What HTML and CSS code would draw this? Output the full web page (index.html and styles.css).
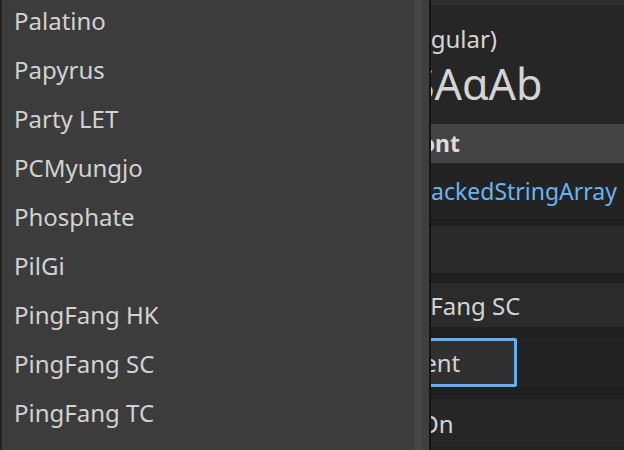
FILE: index.html
```html
<!DOCTYPE html>
<html>
<head>
<meta charset="utf-8">
<link rel="stylesheet" href="styles.css">
</head>
<body>
<div class="inspector">
  <div class="top-strip"></div>
  <div class="preview">
    <div class="preview-name"><span class="pad-name"></span>(Regular)</div>
    <div class="preview-sample"><span class="pad-sample"></span>SAɑAb</div>
  </div>
  <div class="section-header"><span class="pad-header"></span>Font</div>
  <div class="row row-array"><span class="array-text">PackedStringArray</span></div>
  <div class="gap gap-small"></div>
  <div class="row row-empty"></div>
  <div class="gap gap-mid"></div>
  <div class="row row-value"><span class="pad-value"></span>PingFang SC</div>
  <div class="gap gap-mid"></div>
  <div class="row row-input">
    <div class="input-box"><span class="pad-input"></span>Content</div>
  </div>
  <div class="gap gap-large"></div>
  <div class="row row-on"><span class="pad-on"></span>On</div>
</div>

<div class="popup">
  <ul class="font-list">
    <li>Palatino</li>
    <li>Papyrus</li>
    <li>Party LET</li>
    <li>PCMyungjo</li>
    <li>Phosphate</li>
    <li>PilGi</li>
    <li>PingFang HK</li>
    <li>PingFang SC</li>
    <li>PingFang TC</li>
  </ul>
  <div class="scrollbar">
    <div class="scroll-track"></div>
    <div class="scroll-edge"></div>
  </div>
</div>
</body>
</html>
```

FILE: styles.css
```css
html, body {
  margin: 0;
  padding: 0;
}
body {
  width: 624px;
  height: 450px;
  overflow: hidden;
  position: relative;
  background: #222222;
  font-family: "Noto Sans", "Open Sans", sans-serif;
  color: #d4d4d4;
}
.inspector {
  display: flex;
  flex-direction: column;
  width: 624px;
}
.top-strip {
  height: 5px;
  background: #2e2e2e;
}
.preview {
  height: 119px;
  background: #262626;
  display: flex;
  flex-direction: column;
  white-space: nowrap;
}
.preview-name {
  font-size: 24px;
  line-height: 30px;
  margin-top: 19px;
  display: flex;
}
.pad-name { width: 395px; flex: none; }
.preview-sample {
  font-size: 43px;
  line-height: 50px;
  margin-top: 5px;
  display: flex;
}
.pad-sample { width: 411px; flex: none; }
.section-header {
  height: 39px;
  background: #444444;
  font-weight: bold;
  font-size: 23px;
  line-height: 39px;
  color: #dcdcdc;
  display: flex;
  white-space: nowrap;
}
.pad-header { width: 408px; flex: none; }
.row {
  display: flex;
  align-items: center;
  white-space: nowrap;
  font-size: 24px;
}
.row-array {
  height: 56px;
  background: #232323;
  justify-content: flex-end;
  padding-right: 7px;
}
.array-text { color: #66b5f2; font-size: 23px; }
.gap-small { height: 7px; background: #1f1f1f; }
.gap-mid { height: 10px; background: #202020; }
.gap-large { height: 12px; background: #202020; }
.row-empty { height: 47px; background: #2a2a2a; }
.row-value {
  height: 44px;
  background: #2b2b2b;
}
.row-on {
  height: 47px;
  background: #262626;
  padding-top: 2px;
  box-sizing: border-box;
}
.pad-value { width: 380px; flex: none; }
.pad-on { width: 420px; flex: none; }
.row-input {
  height: 50px;
  background: #232323;
}
.input-box {
  margin-left: 360px;
  width: 157px;
  height: 49px;
  border: 3px solid #62b0f3;
  border-radius: 2px;
  background: #303030;
  display: flex;
  align-items: center;
  box-sizing: border-box;
}
.pad-input { width: 7px; flex: none; }

.popup {
  position: absolute;
  left: 0;
  top: 0;
  width: 431px;
  height: 450px;
  display: flex;
  background: #3c3c3c;
  border-left: 2px solid #232323;
  box-sizing: border-box;
  overflow: hidden;
}
.font-list {
  list-style: none;
  margin: 0;
  padding: 0 0 0 12px;
  flex: 1;
  font-size: 24px;
  line-height: 49px;
  margin-top: -4px;
  color: #d2d2d2;
}
.font-list li { white-space: nowrap; }
.scrollbar {
  display: flex;
  width: 16px;
  flex: none;
}
.scroll-track { width: 7px; background: #474747; }
.scroll-edge { width: 7px; background: #3f3f3f; border-right: 2px solid #151515; }
```
